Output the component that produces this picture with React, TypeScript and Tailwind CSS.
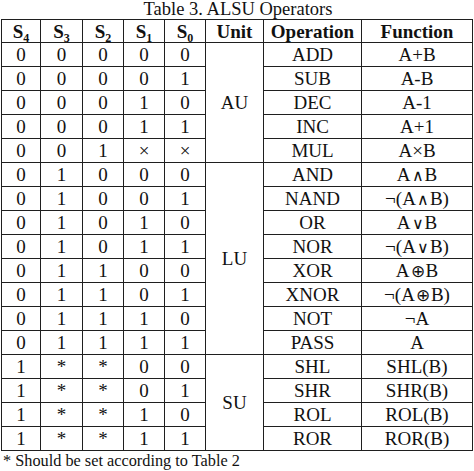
import React from 'react';

type Row = { s: string[]; op: string; fn: string };

// Bit patterns per operation, grouped by unit
const rows: Row[] = [
  { s: ['0', '0', '0', '0', '0'], op: 'ADD', fn: 'A+B' },
  { s: ['0', '0', '0', '0', '1'], op: 'SUB', fn: 'A-B' },
  { s: ['0', '0', '0', '1', '0'], op: 'DEC', fn: 'A-1' },
  { s: ['0', '0', '0', '1', '1'], op: 'INC', fn: 'A+1' },
  { s: ['0', '0', '1', '×', '×'], op: 'MUL', fn: 'A×B' },
  { s: ['0', '1', '0', '0', '0'], op: 'AND', fn: 'A∧B' },
  { s: ['0', '1', '0', '0', '1'], op: 'NAND', fn: '¬(A∧B)' },
  { s: ['0', '1', '0', '1', '0'], op: 'OR', fn: 'A∨B' },
  { s: ['0', '1', '0', '1', '1'], op: 'NOR', fn: '¬(A∨B)' },
  { s: ['0', '1', '1', '0', '0'], op: 'XOR', fn: 'A⊕B' },
  { s: ['0', '1', '1', '0', '1'], op: 'XNOR', fn: '¬(A⊕B)' },
  { s: ['0', '1', '1', '1', '0'], op: 'NOT', fn: '¬A' },
  { s: ['0', '1', '1', '1', '1'], op: 'PASS', fn: 'A' },
  { s: ['1', '*', '*', '0', '0'], op: 'SHL', fn: 'SHL(B)' },
  { s: ['1', '*', '*', '0', '1'], op: 'SHR', fn: 'SHR(B)' },
  { s: ['1', '*', '*', '1', '0'], op: 'ROL', fn: 'ROL(B)' },
  { s: ['1', '*', '*', '1', '1'], op: 'ROR', fn: 'ROR(B)' },
];

// where each unit label starts and how many rows it covers
const units: Record<number, { name: string; span: number }> = {
  0: { name: 'AU', span: 5 },
  5: { name: 'LU', span: 8 },
  13: { name: 'SU', span: 4 },
};

const cell =
  "border border-[#1f1f1f] text-center align-middle p-0 leading-none font-['Liberation_Serif',serif] text-[19px]";

// logic symbols come out too heavy in the fallback serif, so shrink them a little
const Fn: React.FC<{ text: string }> = ({ text }) => (
  <>
    {text.split('').map((ch, i) =>
      ch === '⊕' ? (
        <span key={i} className="font-['DejaVu_Sans',sans-serif] font-light text-[17px] mx-[1px]">
          {ch}
        </span>
      ) : '∧∨'.includes(ch) ? (
        <span key={i} className="font-['DejaVu_Sans',sans-serif] font-light text-[16px] mx-[1px]">
          {ch}
        </span>
      ) : (
        <span key={i}>{ch}</span>
      )
    )}
  </>
);

const App: React.FC = () => {
  return (
    <div className="w-[474px] h-[471px] bg-white text-[#111] font-['Liberation_Serif',serif] overflow-hidden">
      {/* Title */}
      <div className="h-[19px] text-center text-[18.5px] leading-[19px] pl-[2px]">
        Table 3. ALSU Operators
      </div>

      <table className="border-collapse table-fixed w-[472px] ml-[1px] text-[19px] text-[#111]">
        <colgroup>
          <col className="w-[39px]" />
          <col className="w-[42px]" />
          <col className="w-[41px]" />
          <col className="w-[41px]" />
          <col className="w-[41px]" />
          <col className="w-[58px]" />
          <col className="w-[98px]" />
          <col className="w-[111px]" />
        </colgroup>
        <thead>
          <tr className="h-[23px]">
            {['4', '3', '2', '1', '0'].map((n) => (
              <th key={n} className={`${cell} font-bold`}>
                S<sub className="text-[12px] align-baseline relative top-[4px]">{n}</sub>
              </th>
            ))}
            <th className={`${cell} font-bold`}>Unit</th>
            <th className={`${cell} font-bold`}>Operation</th>
            <th className={`${cell} font-bold`}>Function</th>
          </tr>
        </thead>
        <tbody>
          {rows.map((r, i) => (
            <tr key={r.op} className="h-[24px]">
              {r.s.map((v, j) => (
                <td key={j} className={`${cell} ${v === '×' ? 'text-[16px]' : ''}`}>
                  {v}
                </td>
              ))}
              {units[i] && (
                <td rowSpan={units[i].span} className={cell}>
                  {units[i].name}
                </td>
              )}
              <td className={cell}>{r.op}</td>
              <td className={cell}>
                <Fn text={r.fn} />
              </td>
            </tr>
          ))}
        </tbody>
      </table>

      {/* Footnote */}
      <div className="text-[16.3px] leading-[18px] pl-[3px] pt-[1px]">
        * Should be set according to Table 2
      </div>
    </div>
  );
};

export default App;
